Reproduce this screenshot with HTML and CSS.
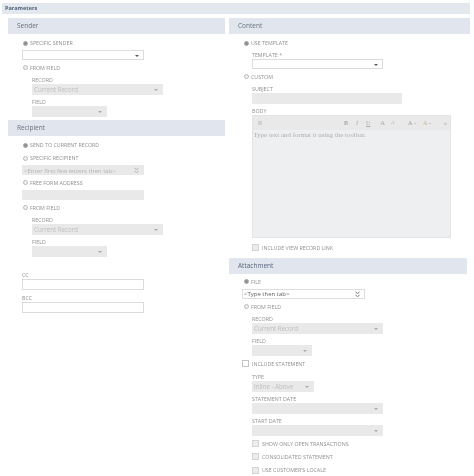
FILE: index.html
```html
<!DOCTYPE html>
<html lang="en">
<head>
<meta charset="utf-8">
<title>Parameters</title>
<link rel="stylesheet" href="styles.css">
</head>
<body>
<div class="page">
  <div class="title-bar">Parameters</div>
  <div class="columns">
    <div class="col col-left">
      <h2 class="head">Sender</h2>
      <div class="radio-row first"><span class="radio on"></span>SPECIFIC SENDER</div>
      <div class="ctl w122 lead select"><i class="arrow dark"></i></div>
      <div class="radio-row"><span class="radio"></span>FROM FIELD</div>
      <div class="sub">
        <div class="lbl">RECORD</div>
        <div class="ctl w131 off select">Current Record<i class="arrow"></i></div>
        <div class="lbl">FIELD</div>
        <div class="ctl w75 off select"><i class="arrow"></i></div>
      </div>
      <h2 class="head gap-head">Recipient</h2>
      <div class="radio-row second"><span class="radio on"></span>SEND TO CURRENT RECORD</div>
      <div class="radio-row"><span class="radio"></span>SPECIFIC RECIPIENT</div>
      <div class="ctl w122 lead off select small">&lt;Enter first few letters then tab&gt;<svg class="dbl" viewBox="0 0 7 7"><path d="M1.500 1l2 1.500 2-1.500M1.500 4l2 1.500 2-1.500" fill="none" stroke="#aaa" stroke-width=".9"/></svg></div>
      <div class="radio-row"><span class="radio"></span>FREE FORM ADDRESS</div>
      <div class="ctl w122 lead off"></div>
      <div class="radio-row rf"><span class="radio"></span>FROM FIELD</div>
      <div class="sub">
        <div class="lbl">RECORD</div>
        <div class="ctl w131 off select">Current Record<i class="arrow"></i></div>
        <div class="lbl">FIELD</div>
        <div class="ctl w75 off select"><i class="arrow"></i></div>
      </div>
      <div class="plain">
        <div class="lbl">CC</div>
        <div class="ctl w122"></div>
        <div class="lbl">BCC</div>
        <div class="ctl w122"></div>
      </div>
    </div>
    <div class="col col-right">
      <h2 class="head">Content</h2>
      <div class="radio-row first"><span class="radio on"></span>USE TEMPLATE</div>
      <div class="sub tight">
        <div class="lbl">TEMPLATE <span class="req">*</span></div>
        <div class="ctl w131 select"><i class="arrow dark"></i></div>
      </div>
      <div class="radio-row"><span class="radio"></span>CUSTOM</div>
      <div class="sub">
        <div class="lbl">SUBJECT</div>
        <div class="ctl w150 off"></div>
        <div class="lbl">BODY</div>
        <div class="editor">
          <div class="toolbar">
            <svg class="tb-grid" viewBox="0 0 6 6"><path d="M0 1h6M0 3h6M0 5h6M1.500 0v6M4.500 0v6" stroke="#bbb" stroke-width=".7"/></svg>
            <span class="tools">
              <b>B</b><em>I</em><u>U</u><span class="big">A</span><span class="tiny">A</span><span class="color">A<i class="mini"></i></span><span class="hl">A<i class="mini"></i></span><span class="more">»</span>
            </span>
          </div>
          <div class="editor-body">Type text and format it using the toolbar.</div>
        </div>
      </div>
      <div class="check-row sub-check"><span class="check"></span>INCLUDE VIEW RECORD LINK</div>
      <h2 class="head attach">Attachment</h2>
      <div class="radio-row second-small"><span class="radio on"></span>FILE</div>
      <div class="ctl w123 lead select typed">&lt;Type then tab&gt;<svg class="dbl" viewBox="0 0 7 7"><path d="M1.500 1l2 1.500 2-1.500M1.500 4l2 1.500 2-1.500" fill="none" stroke="#666" stroke-width=".9"/></svg></div>
      <div class="radio-row rf"><span class="radio"></span>FROM FIELD</div>
      <div class="sub">
        <div class="lbl">RECORD</div>
        <div class="ctl w131 off select">Current Record<i class="arrow"></i></div>
        <div class="lbl">FIELD</div>
        <div class="ctl w60 off select"><i class="arrow"></i></div>
      </div>
      <div class="check-row lead-check"><span class="check white"></span>INCLUDE STATEMENT</div>
      <div class="sub stmt">
        <div class="lbl">TYPE</div>
        <div class="ctl w62 off select">Inline - Above<i class="arrow"></i></div>
        <div class="lbl">STATEMENT DATE</div>
        <div class="ctl w131 off select"><i class="arrow"></i></div>
        <div class="lbl">START DATE</div>
        <div class="ctl w131 off select"><i class="arrow"></i></div>
      </div>
      <div class="check-row sub-check stacked"><span class="check"></span>SHOW ONLY OPEN TRANSACTIONS</div>
      <div class="check-row sub-check stacked"><span class="check"></span>CONSOLIDATED STATEMENT</div>
      <div class="check-row sub-check stacked"><span class="check"></span>USE CUSTOMER'S LOCALE</div>
    </div>
  </div>
</div>
</body>
</html>
```
FILE: styles.css
```css
html, body {
  margin: 0;
  padding: 0;
  height: 476px;
  overflow: hidden;
  background: #fff;
}
.page {
  width: 474px;
  padding-top: 3px;
  font-family: "Open Sans", "Liberation Sans", sans-serif;
  color: #8f8f8f;
  filter: blur(0.4px);
}
.title-bar {
  height: 11px;
  line-height: 11px;
  margin: 0 4px 0 2px;
  padding-left: 3px;
  background: #e3e7ee;
  color: #4d5f7a;
  font-size: 5.500px;
  font-weight: 700;
}
.columns {
  display: flex;
  margin-top: 4px;
  padding-left: 8px;
  gap: 4px;
}
.col-left { width: 217px; }
.col-right { width: 241px; }
.head {
  box-sizing: border-box;
  height: 16px;
  line-height: 16px;
  margin: 0;
  padding-left: 9px;
  background: #e1e6ee;
  color: #66717f;
  font-size: 6.500px;
  font-weight: 400;
}
.gap-head { margin-top: 3.500px; }
.attach { margin-top: 4px; width: 238px; color: #56647a; }
.radio-row, .check-row {
  display: flex;
  align-items: center;
  height: 12px;
  margin-top: 1px;
  font-size: 5.300px;
  color: #8f8f8f;
  white-space: nowrap;
}
.radio-row { padding-left: 14.500px; }
.radio-row.first { margin-top: 3px; }
.radio-row.second { margin-top: 3px; }
.radio-row.second-small { margin-top: 2px; }
.ctl + .radio-row, .sub + .radio-row { margin-top: 1.500px; }
.ctl + .radio-row.rf { margin-top: 2px; }
.radio {
  flex: none;
  box-sizing: border-box;
  width: 5px;
  height: 5px;
  margin-right: 2.500px;
  border: 1px solid #b9b9b9;
  border-radius: 50%;
  background: #f0f0f0;
}
.radio.on { background: #8f8f8f; border-color: #a8a8a8; }
.ctl {
  box-sizing: border-box;
  position: relative;
  height: 11px;
  line-height: 10px;
  padding-left: 1px;
  border: 0.500px solid #dcdcdc;
  background: #fff;
  font-size: 6.200px;
  color: #bdbdbd;
  white-space: nowrap;
  overflow: hidden;
}
.ctl.off { background: #e9e9e9; border-color: #e9e9e9; }
.lead { height: 10px; line-height: 9px; margin-left: 14px; margin-top: 1px; }
.col-right .lead { margin-left: 13px; }
.small { font-size: 6.100px; color: #b3b3b3; }
.typed { color: #606060; font-size: 6px; }
.w122 { width: 122px; }
.w123 { width: 123px; }
.w131 { width: 131px; }
.w150 { width: 150px; }
.w75 { width: 75px; }
.w60 { width: 60px; }
.w62 { width: 62px; }
.arrow {
  position: absolute;
  right: 4px;
  top: 4px;
  width: 0;
  height: 0;
  border-left: 2px solid transparent;
  border-right: 2px solid transparent;
  border-top: 2.500px solid #aaa;
}
.arrow.dark { border-top-color: #555; }
.dbl {
  position: absolute;
  right: 3px;
  top: 1px;
  width: 7px;
  height: 7px;
}
.sub { margin-left: 24px; margin-top: 2px; }
.col-right .sub { margin-left: 23px; }
.sub.tight { margin-top: 2px; }
.sub.tight .ctl { height: 10px; }
.sub.stmt { margin-top: 3px; }
.lbl {
  height: 8px;
  line-height: 8px;
  font-size: 5.300px;
  color: #8f8f8f;
  white-space: nowrap;
}
.ctl + .lbl { margin-top: 3px; }
.req { color: #999; }
.plain { margin: 14px 0 0 14px; }
.plain .ctl + .lbl { margin-top: 4px; }
.editor {
  box-sizing: border-box;
  width: 199px;
  height: 123px;
  border: 0.500px solid #e4e4e4;
  background: #eeeff0;
}
.toolbar {
  display: flex;
  align-items: center;
  height: 14px;
  background: #e9e9e9;
  padding-left: 5px;
}
.tb-grid { width: 6px; height: 6px; }
.tools {
  display: flex;
  align-items: center;
  margin-left: 82px;
  font-family: "Liberation Serif", serif;
  font-size: 6px;
  font-weight: 400;
  color: #a8a8a8;
}
.tools > * {
  position: relative;
  font-style: normal;
  text-decoration: none;
}
.tools b { width: 12px; font-weight: 700; }
.tools em { width: 10px; font-style: italic; }
.tools u { width: 14px; text-decoration: underline; }
.big { width: 11px; font-size: 7px; }
.tiny { width: 17px; font-size: 5px; }
.color { width: 15px; color: #999; }
.hl { width: 21px; color: #c9b48c; }
.more { width: 6px; }
.mini {
  position: absolute;
  left: 6px;
  top: 3.500px;
  border-left: 1px solid transparent;
  border-right: 1px solid transparent;
  border-top: 1.500px solid #aaa;
}
.editor-body {
  padding-left: 0.500px;
  font-family: "Liberation Serif", serif;
  font-size: 6.900px;
  line-height: 9px;
  color: #aeaeae;
  white-space: nowrap;
}
.check {
  flex: none;
  box-sizing: border-box;
  width: 7px;
  height: 7px;
  margin-right: 3px;
  border: 0.500px solid #d4d4d4;
  background: #ececec;
}
.check.white { background: #fff; border-color: #c4c4c4; }
.sub-check { margin-left: 23px; margin-top: 4px; }
.lead-check { margin-left: 13px; margin-top: 2px; }
.stacked { margin-top: 1.300px; }
.stmt + .stacked { margin-top: 2px; }
```
